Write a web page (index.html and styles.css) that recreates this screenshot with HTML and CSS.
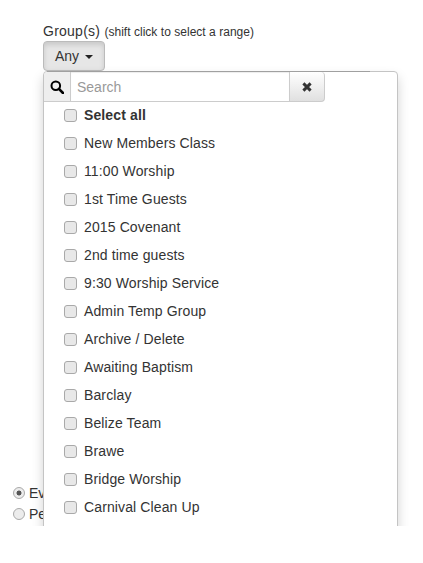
FILE: index.html
```html
<!DOCTYPE html>
<html lang="en">
<head>
<meta charset="utf-8">
<title>Groups</title>
<link rel="stylesheet" href="styles.css">
</head>
<body>
<div class="page">
  <div class="group-field">
    <div class="field-label">Group(s) <small>(shift click to select a range)</small></div>
    <button class="any-btn" type="button">Any <span class="caret"></span></button>
    <div class="menu">
      <div class="search">
        <span class="search-addon">
          <svg width="14" height="14" viewBox="0 0 14 14"><circle cx="5.8" cy="5.8" r="4.3" fill="none" stroke="#000" stroke-width="2"/><path d="M8.9 8.9L13 13" stroke="#000" stroke-width="2.6" stroke-linecap="round"/></svg>
        </span>
        <input class="search-input" type="text" placeholder="Search">
        <button class="clear-btn" type="button" aria-label="Clear">
          <svg width="10" height="10" viewBox="0 0 10 10"><path d="M1.4 1.4L8.6 8.6M8.6 1.4L1.4 8.6" stroke="#333" stroke-width="2.9"/></svg>
        </button>
      </div>
      <ul class="options">
        <li class="option strong"><span class="box"></span>Select all</li>
        <li class="option"><span class="box"></span>New Members Class</li>
        <li class="option"><span class="box"></span>11:00 Worship</li>
        <li class="option"><span class="box"></span>1st Time Guests</li>
        <li class="option"><span class="box"></span>2015 Covenant</li>
        <li class="option"><span class="box"></span>2nd time guests</li>
        <li class="option"><span class="box"></span>9:30 Worship Service</li>
        <li class="option"><span class="box"></span>Admin Temp Group</li>
        <li class="option"><span class="box"></span>Archive / Delete</li>
        <li class="option"><span class="box"></span>Awaiting Baptism</li>
        <li class="option"><span class="box"></span>Barclay</li>
        <li class="option"><span class="box"></span>Belize Team</li>
        <li class="option"><span class="box"></span>Brawe</li>
        <li class="option"><span class="box"></span>Bridge Worship</li>
        <li class="option"><span class="box"></span>Carnival Clean Up</li>
      </ul>
    </div>
  </div>
  <div class="radios">
    <label class="radio-row"><span class="radio on"></span>Everyone</label>
    <label class="radio-row"><span class="radio"></span>People</label>
  </div>
</div>
</body>
</html>
```
FILE: styles.css
```css
html, body {
  margin: 0;
  padding: 0;
  background: #fff;
}
body {
  font-family: "Liberation Sans", Arial, sans-serif;
  font-size: 14px;
  color: #333;
}
.page {
  height: 526px;
  overflow: hidden;
  position: relative;
}
.group-field {
  position: relative;
  margin-left: 43px;
  padding-top: 21px;
}
.field-label {
  line-height: 20px;
  height: 20px;
  letter-spacing: .25px;
}
.field-label small {
  font-size: 12px;
  letter-spacing: .03px;
}
.any-btn {
  display: block;
  width: 62px;
  height: 30px;
  padding: 0;
  font: inherit;
  color: #333;
  background: #e6e6e6;
  border: 1px solid #bbb;
  border-radius: 4px;
  box-shadow: inset 0 3px 5px rgba(0, 0, 0, .125);
}
.caret {
  display: inline-block;
  width: 0;
  height: 0;
  margin-left: 2px;
  vertical-align: middle;
  border-top: 4px solid #222;
  border-left: 4px solid transparent;
  border-right: 4px solid transparent;
}
.menu {
  position: absolute;
  z-index: 1;
  top: 71px;
  left: 0;
  width: 353px;
  background: #fff;
  border: 1px solid #c4c4c4;
  border-radius: 4px;
  box-shadow: 0 6px 12px rgba(0, 0, 0, .175);
  padding-bottom: 40px;
}
.menu::before {
  content: "";
  position: absolute;
  top: -1px;
  left: 3px;
  width: 323px;
  height: 1px;
  background: #a0a0a0;
}
.search {
  display: flex;
  height: 30px;
  width: 281px;
}
.search-addon {
  flex: none;
  width: 26px;
  display: flex;
  align-items: center;
  justify-content: center;
  background: #eee;
  border-bottom: 1px solid #ccc;
  border-right: 1px solid #ccc;
  border-radius: 4px 0 0 0;
}
.search-input {
  flex: none;
  width: 218px;
  height: 30px;
  box-sizing: border-box;
  padding: 0 6px;
  font: inherit;
  color: #555;
  background: #fff;
  border: 0;
  border-bottom: 1px solid #ccc;
  outline: 0;
  box-shadow: inset 0 1px 1px rgba(0, 0, 0, .075);
}
.search-input::placeholder {
  color: #999;
  opacity: 1;
}
.clear-btn {
  flex: none;
  width: 36px;
  height: 30px;
  padding: 0;
  display: flex;
  align-items: center;
  justify-content: center;
  background: linear-gradient(#fff, #e0e0e0);
  border: 1px solid #ccc;
  border-top: 0;
  border-radius: 0 4px 4px 0;
  box-sizing: border-box;
}
.options {
  list-style: none;
  margin: 0;
  padding: 0;
}
.option {
  box-sizing: border-box;
  display: flex;
  align-items: center;
  height: 28px;
  padding: 0 0 2px 20px;
  line-height: 20px;
  letter-spacing: .12px;
}
.option.strong {
  font-weight: bold;
}
.box {
  flex: none;
  width: 11px;
  height: 11px;
  margin-right: 7px;
  background: #e8e8e8;
  border: 1px solid #a9a9a9;
  border-radius: 3px;
}
.radios {
  position: absolute;
  top: 483px;
  left: 13px;
}
.radio-row {
  display: flex;
  align-items: center;
  height: 20px;
  color: #333;
}
.radio-row + .radio-row {
  margin-top: 1px;
}
.radio {
  box-sizing: border-box;
  width: 12px;
  height: 12px;
  margin-right: 4px;
  border-radius: 50%;
  border: 1px solid #a9a9a9;
  background: #ececec;
}
.radio.on {
  background: radial-gradient(circle, #555 0, #555 30%, #ececec 40%);
}
```
